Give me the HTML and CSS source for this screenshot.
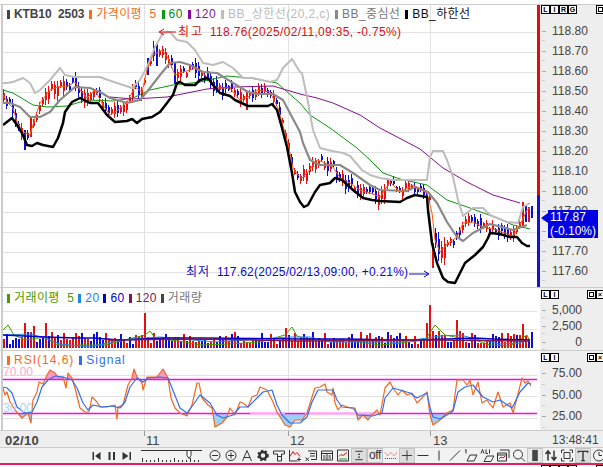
FILE: index.html
```html
<!DOCTYPE html>
<html lang="ko">
<head>
    <meta charset="UTF-8">
    <meta name="viewport" content="width=device-width, initial-scale=1.0">
    <title>KTB10 2503</title>
    <link rel="stylesheet" href="styles.css">
</head>
<body>
    <div class="row price-row">
        <div class="plot">
            <svg id="price-chart" width="534" height="282" viewBox="3 5 534 282">
                <g id="price-layer"></g>
                <path class="ann-line-high" d="M176 32H160M164 29L159 32L164 35"/>
                <text class="ann ann-high" x="178" y="36" textLength="24">최고</text>
                <text class="ann ann-high" x="210" y="36" textLength="191">118.76(2025/02/11,09:35, -0.75%)</text>
                <text class="ann ann-low" x="186" y="276" textLength="23">최저</text>
                <text class="ann ann-low" x="217" y="276" textLength="191">117.62(2025/02/13,09:00, +0.21%)</text>
                <path class="ann-line-low" d="M409 274H428M424 271L429 274L424 277"/>
            </svg>
            <div class="legend">
                <span class="item strong"><i class="mark c-dark"></i>KTB10&nbsp; 2503</span>
                <span class="item t-orange"><i class="mark c-orange"></i>가격이평&nbsp; 5</span>
                <span class="item t-green"><i class="mark c-green"></i>60</span>
                <span class="item t-purple"><i class="mark c-purple"></i>120</span>
                <span class="item t-silver"><i class="mark c-silver"></i>BB_상한선(20,2,c)</span>
                <span class="item t-grey"><i class="mark c-grey"></i>BB_중심선</span>
                <span class="item t-black"><i class="mark c-black"></i>BB_하한선</span>
            </div>
        </div>
        <div class="stripe"><div class="stripe-red"></div><div class="stripe-blue"></div></div>
        <div class="axis price-axis">
            <div class="btns"><b>L</b><b>I</b><b>R</b><b>G</b><b class="far"></b></div>
            <div class="tick-label">118.80</div>
            <div class="tick-label">118.70</div>
            <div class="tick-label">118.60</div>
            <div class="tick-label">118.50</div>
            <div class="tick-label">118.40</div>
            <div class="tick-label">118.30</div>
            <div class="tick-label">118.20</div>
            <div class="tick-label">118.10</div>
            <div class="tick-label">118.00</div>
            <div class="tick-label">117.90</div>
            <div class="tick-label"></div>
            <div class="tick-label">117.70</div>
            <div class="tick-label">117.60</div>
            <div class="last-tag">117.87<br>(-0.10%)</div>
        </div>
    </div>

    <div class="row volume-row">
        <div class="plot">
            <svg id="volume-chart" width="534" height="62" viewBox="3 288 534 62"></svg>
            <div class="legend">
                <span class="item t-lime"><i class="mark c-lime"></i>거래이평&nbsp; 5</span>
                <span class="item t-sky"><i class="mark c-sky"></i>20</span>
                <span class="item t-navy"><i class="mark c-navy"></i>60</span>
                <span class="item t-maroon"><i class="mark c-maroon"></i>120</span>
                <span class="item t-grey"><i class="mark c-dark"></i>거래량</span>
            </div>
        </div>
        <div class="stripe"></div>
        <div class="axis volume-axis">
            <div class="btns"><b>L</b><b>I</b><b class="far"></b><b class="close">×</b></div>
            <div class="tick-label">5,000</div>
            <div class="tick-label">2,500</div>
            <div class="tick-label">0</div>
        </div>
    </div>

    <div class="row rsi-row">
        <div class="plot">
            <svg id="rsi-chart" width="534" height="79" viewBox="3 351 534 79"></svg>
            <div class="legend">
                <span class="item t-orange"><i class="mark c-orange"></i>RSI(14,6)</span>
                <span class="item t-blue"><i class="mark c-blue"></i>Signal</span>
            </div>
            <span class="level level-high">70.00</span>
            <span class="level level-low">30.00</span>
        </div>
        <div class="stripe"></div>
        <div class="axis rsi-axis">
            <div class="btns"><b>L</b><b>I</b><b class="far"></b><b class="close">×</b></div>
            <div class="tick-label">75.00</div>
            <div class="tick-label">50.00</div>
            <div class="tick-label">25.00</div>
        </div>
    </div>

    <div class="row date-row">
        <div class="dates">
            <span class="date first">02/10</span>
            <span class="date">11</span>
            <span class="date d12">12</span>
            <span class="date d13">13</span>
        </div>
        <div class="clock">13:48:41</div>
    </div>

    <div class="toolbar">
        <span class="nav"><svg viewBox="0 0 14 14"><path class="fill" d="M3 3h1.5v8H3zM11 3v8L5.500 7z"/></svg></span>
        <span class="nav"><svg viewBox="0 0 14 14"><path class="fill" d="M4 3h2v8H4zM8.500 3h2v8h-2z"/></svg></span>
        <span class="nav"><svg viewBox="0 0 14 14"><path class="fill" d="M10 3h1.500v8H10zM3 3v8l6-4z"/></svg></span>
        <span class="slider">
            <svg viewBox="0 0 62 14">
                <path class="ink" d="M0 1.500H61"/>
                <path class="ticks" d="M1 12H61"/>
                <path class="ticks-long" d="M1 11H61"/>
                <path class="thumb" d="M46 1.500h4v5l-2 3-2-3z"/>
            </svg>
        </span>
        <span class="tool"><svg viewBox="0 0 14 14"><circle class="ink" cx="7" cy="7" r="5"/><path class="ink" d="M4 7h6"/></svg></span>
        <span class="tool"><svg viewBox="0 0 14 14"><circle class="ink" cx="7" cy="7" r="5"/><path class="ink" d="M4 7h6M7 4v6"/></svg></span>
        <span class="tool"><svg viewBox="0 0 14 14"><path class="ink" d="M2.500 12.500L7 2L11.500 12.500M4 9h6"/></svg></span>
        <span class="tool"><svg viewBox="0 0 14 14"><circle class="gear" cx="7" cy="7" r="3.500"/><circle class="gear-teeth" cx="7" cy="7" r="4.800"/></svg></span>
        <span class="tool"><svg viewBox="0 0 14 14"><path class="ink" d="M1.500 2.500h11v3h-3v7h-4v-7h-4zM5.500 8h4"/></svg></span>
        <span class="tool"><svg viewBox="0 0 14 14"><path class="ink" d="M1.500 1.500v11h8"/><path class="red" d="M2 8l3-5 2 3 2-2 3 4"/><path class="ink" d="M11 9v4M9 11h4"/></svg></span>
        <span class="tool"><svg viewBox="0 0 14 14"><path class="ink" d="M4 2.500h8.500v8.500H7M6 5h5M6 7.500h5"/><path class="ink" d="M1.500 12.500L5 9M1.500 9L5 12.500"/></svg></span>
        <span class="tool"><svg viewBox="0 0 14 14"><path class="ink" d="M1.500 2.500h11v9h-11zM1.500 5h11M7 5v6.500M3 7.500h2.500M8.500 7.500H11M3 9.500h2.500M8.500 9.500H11"/></svg></span>
        <span class="tool"><svg viewBox="0 0 14 14"><path class="ink" d="M1.500 1.500h11v11h-11z"/><path class="red" d="M3 8l2-2 2 1 4-3"/><path class="green" d="M3 10.500h8"/></svg></span>
        <span class="tool on"><svg viewBox="0 0 14 14"><path class="ink" d="M3 2.500h8M3 11.500h8"/><path class="dots" d="M7 5v5"/></svg></span>
        <span class="tool on soft off-text">off</span>
        <span class="tool"><svg viewBox="0 0 14 14"><path class="red-dots" d="M1 4l3 3 3-3 3 3 3-3"/><path class="red-dots" d="M1 10h12"/></svg></span>
        <span class="tool on"><svg viewBox="0 0 14 14"><path class="ink" d="M7 1.500v11M1.500 7h11"/></svg></span>
        <span class="tool"><svg viewBox="0 0 14 14"><path class="ink" d="M1.500 7h11"/></svg></span>
        <span class="tool"><svg viewBox="0 0 14 14"><path class="ink" d="M7 2v10"/></svg></span>
        <span class="tool"><svg viewBox="0 0 14 14"><path class="ink" d="M2 12L12 2"/></svg></span>
        <span class="tool"><svg viewBox="0 0 14 14"><path class="ink" d="M2 1v4M1 1.500h1M6 6.500h7l-3 6H3z"/></svg></span>
        <span class="tool"><svg viewBox="0 0 14 14"><path class="ink" d="M1 5l1.500-4L4 5M6 1v4h2M9.500 1v4M7 7.500h7l-3 5.500H4z"/></svg></span>
        <span class="tool"><svg viewBox="0 0 14 14"><path class="ink" d="M4 1.500h9v8M1.500 4.500h9v8h-9zM1.500 6.500h9"/><path class="red" d="M3 10.500l2-2 2 1 2-2"/></svg></span>
        <span class="tool"><svg viewBox="0 0 14 14"><circle class="ink" cx="6" cy="6" r="4.500"/><path class="ink" d="M9.500 9.500L13 13"/></svg></span>
        <span class="tool on soft"><svg viewBox="0 0 14 14"><rect class="swatch" x="4" y="1" width="6" height="12"/></svg></span>
        <span class="tool"><svg viewBox="0 0 14 14"><path class="ink wide" d="M4 12V3M1.500 5.500L4 2.500l2.500 3M10 2v9M7.500 8.500l2.500 3 2.500-3"/></svg></span>
        <span class="tool"><svg viewBox="0 0 14 14"><path class="ink" d="M1.500 4.500v-3h3M9.500 1.500h3v3M12.500 9.500v3h-3M4.500 12.500h-3v-3M4 4h6v6H4z"/></svg></span>
        <span class="tool on"><svg viewBox="0 0 14 14"><path class="ink wide" d="M2 2.500h10M2 2v2M12 2v2M7 2.500v9.500M5 12.500h4"/></svg></span>
        <span class="tool"><svg viewBox="0 0 14 14"><circle class="ink" cx="7" cy="7" r="5.500"/><path class="ink" d="M7 3.500V7h3"/></svg></span>
    </div>
    <div class="bottom-rule"></div>
    <div class="next-panel"><div class="btns"><b></b><b></b><b></b><b></b><b class="far"></b></div></div>

    <script src="chart.js"></script>
</body>
</html>
```

FILE: styles.css
```css
html, body {
    margin: 0;
    padding: 0;
    width: 603px;
    height: 467px;
    overflow: hidden;
    background: white;
    font-family: "Liberation Sans", "Noto Sans CJK KR", sans-serif;
}
.row {
    display: flex;
    width: 603px;
}
.price-row {
    margin-top: 4px;
    height: 282px;
    border-top: 1px solid #ccc;
}
.volume-row {
    height: 62px;
    border-top: 1px solid #ccc;
}
.rsi-row {
    height: 79px;
    border-top: 1px solid #ccc;
}
.date-row {
    height: 16px;
    border-top: 1px solid #ccc;
    border-bottom: 1px solid #ccc;
    background: #eee;
}
.plot {
    position: relative;
    flex: none;
    width: 534px;
    margin-left: 1px;
    border-left: 2px solid #ccc;
}
.plot svg {
    display: block;
}
.stripe {
    flex: none;
    width: 3px;
}
.stripe-red {
    height: 190px;
    background: #d81010;
}
.stripe-blue {
    height: 92px;
    background: #1414d0;
}
.axis {
    position: relative;
    flex: 1;
    display: flex;
    flex-direction: column;
    box-sizing: border-box;
    background: #eee;
    color: #444;
    font-size: 12px;
}
.price-axis {
    padding-top: 16px;
}
.volume-axis {
    padding-top: 14px;
}
.rsi-axis {
    padding-top: 12px;
}
.tick-label {
    height: 20px;
    line-height: 20px;
    padding-left: 12px;
    flex: none;
    background:
        linear-gradient(#aaa, #aaa) 2px 50% / 4px 1px no-repeat,
        linear-gradient(#ccc, #ccc) 2px 100% / 3px 1px no-repeat;
}
.volume-axis .tick-label {
    height: 16px;
    line-height: 16px;
    width: 30px;
    text-align: right;
}
.rsi-axis .tick-label {
    height: 21.500px;
    line-height: 21.500px;
}
.btns {
    position: absolute;
    top: 0;
    left: 1px;
    right: 0;
    display: flex;
    height: 9px;
}
.btns b {
    box-sizing: border-box;
    flex: none;
    width: 9px;
    height: 9px;
    border: 1px solid #000;
    background: white;
    color: #000;
    font-size: 7px;
    font-weight: bold;
    line-height: 7px;
    text-align: center;
    overflow: hidden;
}
.btns .far {
    position: relative;
    margin-left: auto;
}
.btns .far::after {
    content: "";
    position: absolute;
    left: 1px;
    top: 1px;
    width: 3px;
    height: 3px;
    border: 1px solid #000;
}
.price-axis .btns .far, .next-panel .btns .far {
    width: 7px;
    border-right: none;
}
.btns .close {
    width: 7px;
    border-right: none;
}
.volume-axis .btns, .rsi-axis .btns {
    top: 2px;
}
.last-tag {
    position: absolute;
    top: 205px;
    left: 8px;
    width: 50px;
    height: 28px;
    background: #0000e0;
    color: white;
    line-height: 14px;
    padding-left: 2px;
    box-sizing: border-box;
    white-space: nowrap;
}
.last-tag::before {
    content: "";
    position: absolute;
    left: -7px;
    top: 3px;
    border-style: solid;
    border-width: 5px 7px 5px 0;
    border-color: transparent #0000e0 transparent transparent;
}
.legend {
    position: absolute;
    left: 4px;
    top: 2px;
    display: flex;
    gap: 5px;
    font-size: 12px;
    line-height: 15px;
    white-space: nowrap;
}
.volume-row .legend {
    top: 3px;
    gap: 4px;
}
.item {
    display: flex;
    align-items: center;
    gap: 4px;
    letter-spacing: 0.400px;
}
.strong {
    font-weight: bold;
    color: #444;
    letter-spacing: -0.100px;
}
.mark {
    display: block;
    width: 3px;
    height: 9px;
}
.c-dark { background: #444; }
.c-orange { background: #ff6a20; }
.c-green { background: #0a9a10; }
.c-purple { background: #8a0a90; }
.c-silver { background: #bdbdbd; }
.c-grey { background: #888; }
.c-black { background: #000; }
.c-lime { background: #4a9a00; }
.c-sky { background: #2288dd; }
.c-navy { background: #0000c8; }
.c-maroon { background: #801850; }
.c-blue { background: #3070f0; }
.t-orange { color: #f26a22; }
.t-green { color: #0a8a10; }
.t-purple { color: #7a1a90; }
.t-silver { color: #bbb; }
.t-grey { color: #777; }
.t-black { color: #111; }
.t-lime { color: #4a9a00; }
.t-sky { color: #2288dd; }
.t-navy { color: #0000c8; }
.t-maroon { color: #801850; }
.t-blue { color: #3070f0; }
.rsi-row .item {
    letter-spacing: 1px;
}
.level {
    position: absolute;
    left: 0;
    font-size: 12px;
    line-height: 13px;
}
.level-high {
    top: 15px;
    color: #ffa6cc;
}
.level-low {
    top: 51px;
    color: #a6d4f5;
}
.dates {
    flex: none;
    display: flex;
    width: 537px;
    font-size: 13px;
    line-height: 19px;
    color: #444;
}
.date {
    flex: none;
    width: 144px;
    padding-left: 2px;
    box-sizing: border-box;
    background: linear-gradient(#999, #999) 0 0 / 1px 5px no-repeat;
}
.date.first {
    padding-left: 5px;
    background: none;
    font-weight: bold;
    letter-spacing: 0.300px;
}
.date.d12 {
    width: 142px;
}
.date.d13 {
    width: 107px;
    padding-left: 3px;
}
.clock {
    padding-left: 15px;
    font-size: 12px;
    line-height: 19px;
    color: #444;
}
.toolbar {
    display: flex;
    align-items: center;
    box-sizing: border-box;
    height: 15px;
    padding-left: 89px;
    background: #f2f2f2;
    overflow: hidden;
}
.nav {
    flex: none;
    width: 15px;
    height: 14px;
}
.slider {
    flex: none;
    width: 62px;
    height: 14px;
    margin: 0 4px 0 7px;
}
.tool {
    flex: none;
    box-sizing: border-box;
    width: 16px;
    height: 15px;
    padding: 0 1px;
    text-align: center;
    font-size: 12px;
    line-height: 13px;
    color: #333;
}
.tool.on {
    background: #ddd;
    border: 1px solid #c4c4c4;
    padding: 0;
}
.tool.soft {
    background: #e8e8e8;
}
.off-text {
    letter-spacing: -0.300px;
}
.toolbar svg {
    display: block;
    width: 100%;
    height: 100%;
    fill: none;
}
.ink { stroke: #333; stroke-width: 1; fill: none; }
.wide { stroke-width: 1.500; }
.fill { fill: #333; }
.red { stroke: #d81818; stroke-width: 1; fill: none; }
.green { stroke: #2a9a2a; stroke-width: 1; fill: none; }
.dots { stroke: #333; stroke-width: 2; stroke-dasharray: 1.500 1.500; }
.red-dots { stroke: #c81818; stroke-width: 1; stroke-dasharray: 1 1; fill: none; }
.ticks { stroke: #333; stroke-width: 2; stroke-dasharray: 1 3; }
.ticks-long { stroke: #333; stroke-width: 4; stroke-dasharray: 1 15; }
.thumb { fill: white; stroke: #333; stroke-width: 1; }
.gear { stroke: #333; stroke-width: 2.500; fill: none; }
.gear-teeth { stroke: #333; stroke-width: 2; stroke-dasharray: 2 2.020; fill: none; }
.swatch { fill: #444; }
.bottom-rule {
    height: 2px;
    background: #e8205a;
}
.next-panel {
    position: relative;
    height: 2px;
    margin-left: 540px;
    overflow: hidden;
}

/* chart */
.grid { stroke: #e2e2e2; stroke-width: 1; shape-rendering: crispEdges; }
.series { fill: none; stroke-linejoin: round; }
.s-ma5 { stroke: #ff5a10; stroke-width: 1; }
.s-ma60 { stroke: #0c960c; stroke-width: 1; }
.s-ma120 { stroke: #86108e; stroke-width: 1; }
.s-upper { stroke: #bdbdbd; stroke-width: 2; }
.s-mid { stroke: #8a8a8a; stroke-width: 2.200; }
.s-lower { stroke: #000; stroke-width: 2.500; }
.s-vlime { stroke: #4a9a00; stroke-width: 1; }
.s-vsky { stroke: #2288dd; stroke-width: 1; }
.s-vnavy { stroke: #0000c8; stroke-width: 1.500; }
.s-vmaroon { stroke: #801850; stroke-width: 1.500; }
.s-rsi { stroke: #f4661c; stroke-width: 1.200; }
.s-signal { stroke: #2f6fef; stroke-width: 1.200; }
.up { fill: #e40f0f; }
.down { fill: #0f0fd0; }
.over { fill: #f79cc4; }
.under { fill: #9dcff6; }
.guide { stroke: #ff00f0; stroke-width: 1.600; }
.guide-soft { stroke: #ffa8ee; stroke-width: 1.600; }
.ann {
    font-family: "Liberation Sans", "Noto Sans CJK KR", sans-serif;
    font-size: 12px;
}
.ann-high { fill: #d81010; }
.ann-low { fill: #0a0ac8; }
.ann-line-high { stroke: #d81010; fill: none; }
.ann-line-low { stroke: #0a0ac8; fill: none; }
```

FILE: chart.js
```js
const NS = "http://www.w3.org/2000/svg";

// small repeatable random so the bars come out the same every load
let seed = 4711;
function rnd() {
    seed = (seed * 16807) % 2147483647;
    return seed / 2147483647;
}

function add(parent, tag, attrs) {
    let el = document.createElementNS(NS, tag);
    for (let k in attrs) el.setAttribute(k, attrs[k]);
    parent.appendChild(el);
    return el;
}

function line(parent, points, cls) {
    add(parent, "polyline", { points: points, class: "series " + cls });
}

function bar(parent, x, w, y1, y2, cls) {
    add(parent, "rect", { x: x, y: y1, width: w, height: y2 - y1, class: cls, "shape-rendering": "crispEdges" });
}

// y of a "x,y x,y" series at any x
function yAt(points, x) {
    let pts = points.trim().split(/\s+/).map(p => p.split(",").map(Number));
    for (let i = 1; i < pts.length; i++) {
        if (x <= pts[i][0]) {
            let t = (x - pts[i - 1][0]) / (pts[i][0] - pts[i - 1][0]);
            return pts[i - 1][1] + (pts[i][1] - pts[i - 1][1]) * t;
        }
    }
    return pts[pts.length - 1][1];
}

function grid(parent, ys, top, bottom) {
    ys.forEach(y => add(parent, "line", { x1: 3, x2: 537, y1: y, y2: y, class: "grid" }));
    [144, 288, 430].forEach(x => add(parent, "line", { x1: x, x2: x, y1: top, y2: bottom, class: "grid" }));
}

/* price panel */
const ma5 = "3,95 8,103 13,108 17,122 23,132 30,135 35,118 40,103 50,90 58,87 68,86 75,82 80,90 87,98 95,90 103,105 110,115 118,110 127,102 135,87 142,92 147,70 153,55 162,50 168,58 175,75 183,72 197,68 208,78 217,88 230,88 240,100 248,97 257,90 270,92 278,108 287,140 290,153 293,168 298,175 302,178 308,172 317,160 323,162 333,167 340,178 350,183 360,190 370,193 380,197 390,182 400,192 413,185 427,193 432,213 435,240 440,252 448,243 457,237 463,223 473,222 483,227 497,230 513,236 520,225 527,210 530,208";
const ma60 = "3,90 13,93 33,105 47,107 67,106 87,100 113,101 133,98 150,90 173,85 200,82 227,76 250,78 277,83 293,97 300,103 310,115 330,128 357,148 370,160 383,173 400,179 427,185 447,200 470,208 497,218 513,225 530,229";
const ma120 = "110,97 133,99 167,97 207,89 233,87 273,86 300,94 317,98 333,103 360,115 380,128 420,149 443,168 467,182 493,195 520,203";
const upper = "3,83 7,83 13,82 23,78 30,83 35,93 40,90 50,80 60,68 65,75 75,77 100,77 108,80 117,83 132,88 140,80 147,67 155,47 163,33 170,32 177,40 187,42 195,50 203,63 213,65 223,62 233,68 243,78 253,78 270,82 277,80 283,68 292,59 300,72 302,73 307,97 313,130 320,148 332,151 343,153 350,156 362,170 370,175 380,178 393,180 427,180 430,157 433,151 443,151 447,160 453,177 458,200 463,216 473,208 483,208 490,215 507,222 518,223 523,207 530,203";
const middle = "3,103 10,103 20,107 30,117 40,117 50,112 60,100 75,87 90,88 100,92 110,98 127,103 140,100 150,88 160,75 170,63 180,62 190,65 203,72 217,73 233,83 248,92 257,94 273,94 283,100 292,117 300,132 303,143 310,160 320,165 340,165 353,173 370,185 380,190 407,191 415,187 428,192 437,203 447,222 457,237 463,241 473,233 490,224 513,230 527,225";
const lower = "3,125 12,118 17,125 22,133 27,145 32,146 37,143 43,145 53,147 58,138 63,123 65,112 72,102 80,98 90,103 98,103 107,115 115,122 127,121 132,119 137,123 142,119 152,117 160,112 167,103 173,95 177,83 180,82 185,85 195,85 200,80 208,78 213,85 220,93 230,96 235,100 248,106 268,106 272,104 277,110 282,128 287,147 292,173 295,192 300,202 304,207 308,205 315,192 320,185 330,183 335,178 342,180 353,190 363,198 372,200 380,201 400,202 407,198 415,195 427,197 428,210 432,243 437,263 443,278 448,282 455,283 460,273 465,263 475,255 483,247 488,238 490,233 500,234 510,237 517,237 522,243 527,246 530,246";

const price = document.getElementById("price-layer");
let priceYs = [];
for (let y = 32; y <= 272; y += 20) priceYs.push(y);
grid(price, priceYs, 5, 287);

// a few candles stand out from the rest, the others just follow the average
const bigCandles = {
    24: ["down", 130, 150], 30: ["up", 118, 137], 147: ["down", 58, 75], 156: ["down", 44, 66],
    174: ["down", 62, 84], 246: ["up", 92, 110], 432: ["up", 243, 268], 522: ["up", 202, 226],
    525: ["down", 206, 222], 528: ["up", 207, 222], 531: ["down", 206, 218]
};
for (let x = 3; x <= 531; x += 3) {
    let c = yAt(ma5, x);
    let big = bigCandles[x];
    if (big) {
        bar(price, x, 1.5, big[1], big[2], big[0]);
        continue;
    }
    let rising = yAt(ma5, x + 3) < c;
    let cls = (rnd() < (rising ? 0.75 : 0.3)) ? "up" : "down";
    let mid = c + (rnd() - 0.5) * 8;
    let half = 3 + rnd() * 7;
    if (x > 432 && x < 445) half += 6;
    bar(price, x, 1, mid - half, mid + half, cls);
    bar(price, x - 0.5, 2, mid - half / 2, mid + half / 2, cls);
}
line(price, ma60, "s-ma60");
line(price, ma120, "s-ma120");
line(price, upper, "s-upper");
line(price, middle, "s-mid");
line(price, ma5, "s-ma5");
line(price, lower, "s-lower");

/* volume panel */
const volume = document.getElementById("volume-chart");
grid(volume, [311, 329], 288, 350);
const bigBars = {
    24: 323, 33: 326, 45: 323, 144: 313, 141: 335, 147: 337, 287: 309, 285: 328, 310: 325,
    429: 305, 426: 323, 432: 331, 438: 331, 456: 320, 459: 331, 522: 324, 525: 336, 105: 333
};
for (let x = 3; x <= 531; x += 3) {
    let top = bigBars[x] || (x > 425 && x < 445 ? 335 : 348 - (4 + rnd() * 12));
    bar(volume, x, 2, top, 348, bigBars[x] || rnd() < 0.55 ? "up" : "down");
}
line(volume, "3,330 8,325 14,335 25,340 45,337 55,344 65,346 80,345 105,345 125,340 145,335 150,331 155,338 170,340 185,342 200,345 230,344 260,342 285,335 292,327 297,336 310,340 345,340 380,345 400,343 425,340 435,325 445,335 460,338 475,340 490,345 510,346 522,338 527,335 530,342", "s-vlime");
line(volume, "3,335 30,334 45,338 60,344 90,347 120,340 160,337 215,342 290,337 310,337 330,342 400,342 440,336 460,335 480,340 500,344 520,343 530,339", "s-vsky");
line(volume, "3,335 46,337 75,338 93,338 120,340 166,338 200,338 300,339 348,339 392,340 420,340 475,338 493,339 530,340", "s-vnavy");
line(volume, "110,340 200,339 300,341 430,340 530,341", "s-vmaroon");

/* rsi panel */
const rsiLine = "3,388 5,395 7,392 10,402 15,410 22,418 28,413 31,423 33,400 37,392 39,382 43,384 47,375 50,370 55,373 58,377 63,377 66,388 68,373 72,378 75,388 80,408 85,412 89,412 92,397 97,402 100,407 107,407 115,405 117,419 118,407 123,405 128,385 132,378 134,369 137,377 142,383 143,390 147,377 157,377 163,369 168,378 171,398 175,408 180,413 187,416 192,405 197,383 199,383 202,398 208,405 212,408 215,427 222,423 227,417 230,408 235,415 240,402 243,403 248,407 252,397 257,395 260,387 267,390 273,402 277,412 282,420 285,425 290,427 295,420 302,420 307,413 312,397 315,388 320,387 325,384 327,392 332,395 333,388 335,403 338,410 342,405 350,408 355,408 358,420 363,415 368,420 372,415 377,410 380,415 385,388 390,382 393,388 398,395 402,390 407,395 412,393 417,403 423,397 427,392 430,415 433,425 440,420 447,413 453,410 457,380 463,380 467,385 470,380 473,395 478,382 482,403 487,400 493,408 498,392 503,407 510,403 513,413 517,398 522,378 525,383 528,381 531,386";
const signalLine = "3,387 7,388 12,393 17,407 25,413 32,412 37,402 42,387 48,380 55,376 63,377 72,380 77,388 83,403 88,410 93,405 102,407 112,406 120,408 125,402 130,387 137,378 143,382 148,378 160,377 168,378 172,388 180,408 187,413 193,405 200,395 210,403 217,415 223,418 233,415 240,407 248,407 257,398 263,392 272,390 277,405 282,415 290,423 300,423 307,417 312,402 318,390 333,390 337,400 342,407 353,408 358,415 373,416 382,413 385,398 393,388 410,393 417,398 427,393 430,408 433,417 440,419 447,415 453,411 458,392 465,387 473,385 483,397 493,402 500,400 512,408 520,392 528,383 531,384";

const rsi = document.getElementById("rsi-chart");
grid(rsi, [375, 396, 418], 351, 430);

let defs = add(rsi, "defs", {});
add(add(defs, "clipPath", { id: "above" }), "rect", { x: 3, y: 351, width: 534, height: 28 });
add(add(defs, "clipPath", { id: "below" }), "rect", { x: 3, y: 413, width: 534, height: 18 });
add(rsi, "polygon", { points: "3,379 " + rsiLine + " 531,379", class: "over", "clip-path": "url(#above)" });
add(rsi, "polygon", { points: "3,413 " + rsiLine + " 531,413", class: "under", "clip-path": "url(#below)" });

add(rsi, "line", { x1: 3, x2: 537, y1: 379.5, y2: 379.5, class: "guide" });
add(rsi, "line", { x1: 3, x2: 537, y1: 413.5, y2: 413.5, class: "guide" });
[[250, 285], [305, 380]].forEach(s => add(rsi, "line", { x1: s[0], x2: s[1], y1: 413.5, y2: 413.5, class: "guide-soft" }));

line(rsi, rsiLine, "s-rsi");
line(rsi, signalLine, "s-signal");
```
